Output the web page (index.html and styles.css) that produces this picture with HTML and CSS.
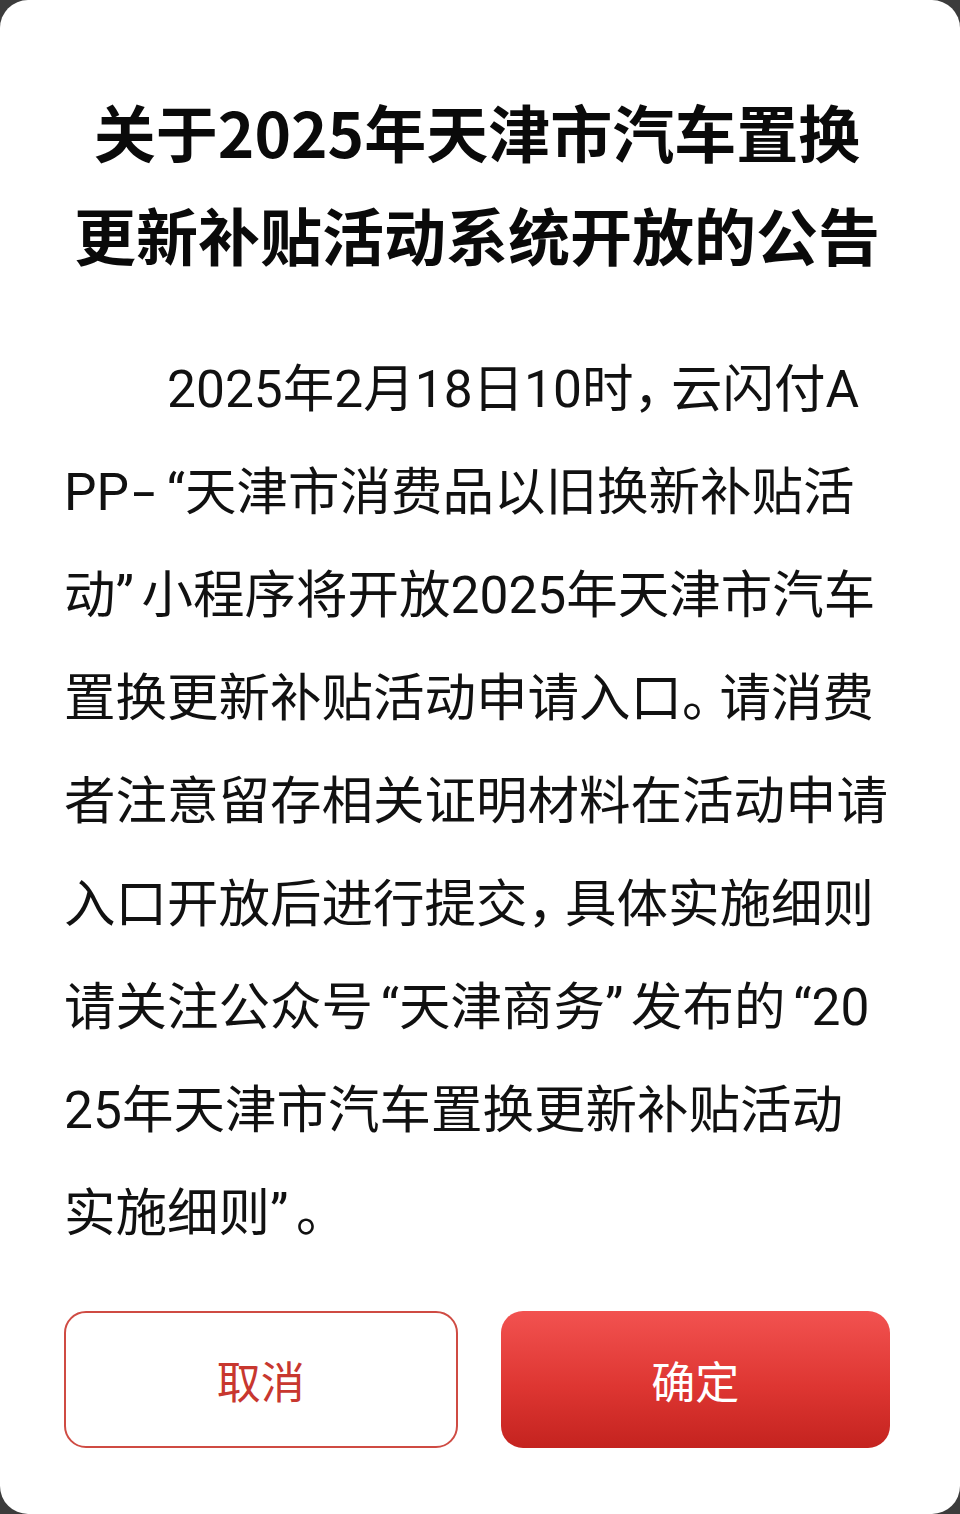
FILE: index.html
```html
<!DOCTYPE html>
<html lang="zh-CN">
<head>
<meta charset="utf-8">
<title>公告</title>
<link rel="stylesheet" href="styles.css">
</head>
<body>
<div class="card">
  <h1 class="title">
    <span class="line">关于2025年天津市汽车置换</span>
    <span class="line">更新补贴活动系统开放的公告</span>
  </h1>
  <p class="content">
    <span class="line indent">2025年2月18日10时<span class="p">，</span>云闪付A</span>
    <span class="line">PP<span class="dash">-</span><span class="q qo">“</span>天津市消费品以旧换新补贴活</span>
    <span class="line">动<span class="q qc">”</span>小程序将开放2025年天津市汽车</span>
    <span class="line">置换更新补贴活动申请入口<span class="p">。</span>请消费</span>
    <span class="line">者注意留存相关证明材料在活动申请</span>
    <span class="line">入口开放后进行提交<span class="p">，</span>具体实施细则</span>
    <span class="line">请关注公众号<span class="q qo">“</span>天津商务<span class="q qc">”</span>发布的<span class="q qo">“</span>20</span>
    <span class="line">25年天津市汽车置换更新补贴活动</span>
    <span class="line">实施细则<span class="q qc">”</span><span class="p">。</span></span>
  </p>
  <div class="actions">
    <button class="btn btn-cancel">取消</button>
    <button class="btn btn-ok">确定</button>
  </div>
</div>
</body>
</html>
```
FILE: styles.css
```css
html, body {
  margin: 0;
  padding: 0;
}
body {
  background: #3c3c3c;
  width: 960px;
  height: 1514px;
  overflow: hidden;
  font-family: Roboto, "Noto Sans CJK SC", sans-serif;
}
.card {
  box-sizing: border-box;
  width: 960px;
  height: 1514px;
  background: #fff;
  border-radius: 28px;
  padding: 80px 70px 0 64px;
}
.line {
  display: block;
  white-space: nowrap;
}
.title {
  margin: 0;
  font-size: 62px;
  line-height: 103px;
  font-weight: 700;
  color: #0a0a0a;
  text-align: center;
  font-family: "Noto Sans CJK SC", sans-serif;
}
.content {
  margin: 52px 0 0 0;
  font-size: 51.5px;
  line-height: 103px;
  color: #111;
}
.content .line {
  height: 103px;
}
.q {
  display: inline-block;
  width: 26px;
  line-height: 1;
}
.qo {
  text-align: right;
}
.qc {
  text-align: left;
}
.p {
  letter-spacing: -14px;
}
.dash {
  display: inline-block;
  width: 30px;
  text-align: center;
  line-height: 1;
  transform: scaleX(1.6);
}
.indent {
  padding-left: 103px;
}
.actions {
  display: flex;
  gap: 43px;
  margin-top: 46px;
}
.btn {
  flex: 1;
  height: 137px;
  border-radius: 22px;
  font-family: "Noto Sans CJK SC", sans-serif;
  font-size: 44px;
  padding: 0;
  cursor: pointer;
}
.btn-cancel {
  background: #fff;
  border: 2px solid #cf4b43;
  color: #c8372f;
}
.btn-ok {
  border: none;
  color: #fff;
  background: linear-gradient(180deg, #f25250 0%, #de3632 55%, #c4231f 100%);
}
```
